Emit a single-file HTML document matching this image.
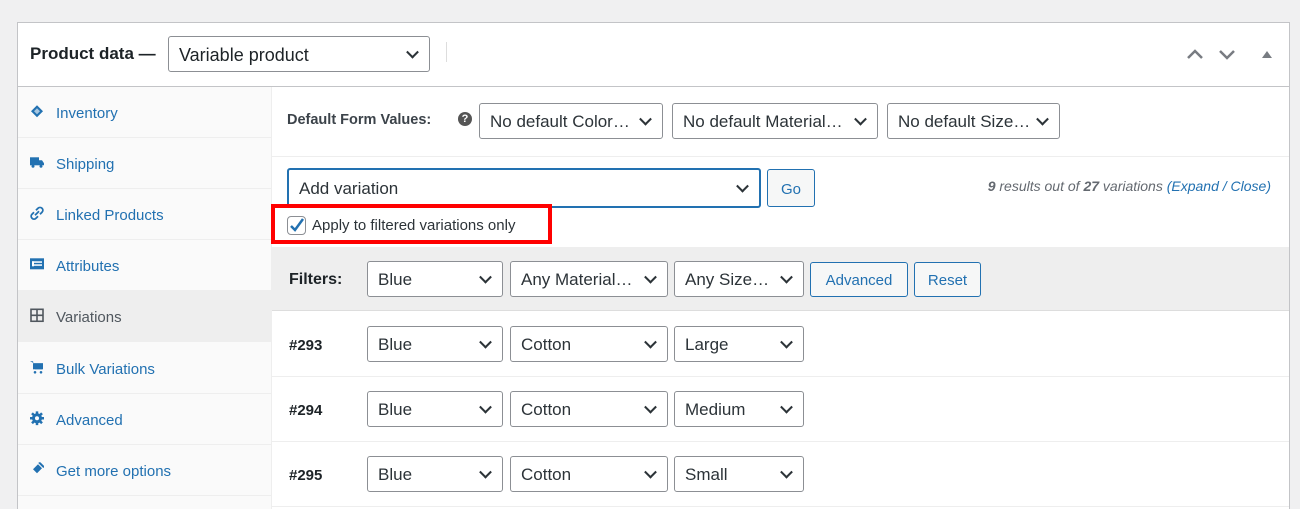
<!DOCTYPE html>
<html><head><meta charset="utf-8"><style>
*{box-sizing:border-box;margin:0;padding:0}
html{width:1300px;height:509px;overflow:hidden}
body{width:1300px;height:509px;background:#f0f0f1;font-family:"Liberation Sans",Arial,sans-serif;position:relative;overflow:hidden;color:#1d2327}
.abs{position:absolute}
.panel{left:17px;top:22px;width:1273px;height:487px;background:#fff;border:1px solid #c3c4c7;border-bottom:none}
.sel{position:absolute;background:#fff;border:1px solid #8c8f94;border-radius:3px;font-size:17px;color:#2c3338;padding-left:10px;padding-top:2px;display:flex;align-items:center;white-space:nowrap;overflow:hidden}
.sel:after{content:"";position:absolute;right:12px;top:50%;width:7px;height:7px;border-right:2px solid #2c3338;border-bottom:2px solid #2c3338;transform:translateY(-70%) rotate(45deg)}
.side{left:18px;top:87px;width:254px;height:422px;background:#fafafa;border-right:1px solid #eee}
.item{position:absolute;left:0;width:254px;height:51px;border-bottom:1px solid #eee;color:#2271b1;font-size:15px;padding-left:38px;padding-top:3px;display:flex;align-items:center}
.ic{position:absolute;left:12px;top:50%;transform:translateY(-55%);width:14px;height:14px}
.btn{position:absolute;border:1px solid #2271b1;border-radius:3px;background:#f6f7f7;color:#2271b1;font-size:15px;padding-top:2px;display:flex;align-items:center;justify-content:center}
.num{position:absolute;left:289px;font-weight:bold;font-size:15px}
.hr{position:absolute;left:272px;width:1017px;height:1px;background:#eee}
</style></head><body>
<div class="abs panel"></div>
<div class="abs" style="left:18px;top:86px;width:1271px;height:1px;background:#c3c4c7"></div>
<div class="abs" style="left:30px;top:44px;font-size:17px;font-weight:600;color:#1d2327">Product data —</div>
<div class="sel" style="left:168px;top:36px;width:262px;height:36px;font-size:18px;color:#1d2327">Variable product</div>
<div class="abs" style="left:446px;top:42px;width:1px;height:20px;background:#ddd"></div>
<svg class="abs" style="left:1185px;top:47px" width="95" height="14"><path d="M3 11 L10 4 L17 11" stroke="#787c82" stroke-width="2.5" fill="none"/><path d="M35 4 L42 11 L49 4" stroke="#787c82" stroke-width="2.5" fill="none"/><path d="M77 11 L82 4 L87 11Z" fill="#787c82"/></svg>

<div class="abs side"></div>
<div class="item" style="left:18px;top:87px">
<svg class="ic" viewBox="0 0 14 14"><path d="M1 7 L7 1 L13 7 L7 13Z" fill="#2271b1"/><path d="M4 7 L7 4 L10 7 L7 10Z" fill="#fff" opacity=".6"/></svg>Inventory</div>
<div class="item" style="left:18px;top:138px">
<svg class="ic" viewBox="0 0 14 14"><rect x="0" y="2" width="9" height="8" fill="#2271b1"/><path d="M9 5h3l2 3v2H9Z" fill="#2271b1"/><circle cx="3" cy="11" r="1.5" fill="#2271b1"/><circle cx="11" cy="11" r="1.5" fill="#2271b1"/></svg>Shipping</div>
<div class="item" style="left:18px;top:189px">
<svg class="ic" viewBox="0 0 14 14"><path d="M6 4 L8 2 A2.5 2.5 0 0 1 12 6 L10 8 M8 10 L6 12 A2.5 2.5 0 0 1 2 8 L4 6 M5 9 L9 5" stroke="#2271b1" stroke-width="1.8" fill="none"/></svg>Linked Products</div>
<div class="item" style="left:18px;top:240px">
<svg class="ic" viewBox="0 0 14 14"><rect x="0" y="1" width="14" height="11" fill="#2271b1"/><rect x="2" y="4" width="10" height="1.5" fill="#fff"/><rect x="2" y="7" width="10" height="1.5" fill="#fff"/><rect x="2" y="4" width="2" height="5" fill="#fff"/></svg>Attributes</div>
<div class="item" style="left:18px;top:291px;background:#eee;color:#50575e">
<svg class="ic" viewBox="0 0 14 14"><rect x="1" y="1" width="12" height="12" stroke="#50575e" stroke-width="1.6" fill="none"/><path d="M7 1v12M1 7h12" stroke="#50575e" stroke-width="1.6"/></svg>Variations</div>
<div class="item" style="left:18px;top:343px">
<svg class="ic" viewBox="0 0 14 14"><path d="M0 1h3l2 8h7l1-6H4" fill="#2271b1"/><rect x="3" y="3" width="10" height="6" fill="#2271b1"/><circle cx="5" cy="12" r="1.3" fill="#2271b1"/><circle cx="11" cy="12" r="1.3" fill="#2271b1"/></svg>Bulk Variations</div>
<div class="item" style="left:18px;top:394px">
<svg class="ic" viewBox="0 0 14 14"><circle cx="7" cy="7" r="5" fill="#2271b1"/><path d="M7 0v14M0 7h14M2 2l10 10M12 2L2 12" stroke="#2271b1" stroke-width="2.5"/><circle cx="7" cy="7" r="2" fill="#fff"/></svg>Advanced</div>
<div class="item" style="left:18px;top:445px">
<svg class="ic" viewBox="0 0 14 14"><path d="M1 13 L5 9 L3 7 L8 2 L12 6 L7 11 L5 9" fill="#2271b1"/><path d="M9 0l5 5" stroke="#2271b1" stroke-width="2"/></svg>Get more options</div>

<div class="abs" style="left:287px;top:112px;font-size:14.5px;font-weight:bold;color:#3c434a">Default Form Values:</div>
<div class="abs" style="left:458px;top:112px;width:14px;height:14px;border-radius:50%;background:#555;color:#fff;font-size:11px;font-weight:bold;text-align:center;line-height:14px">?</div>
<div class="sel" style="left:479px;top:103px;width:184px;height:36px">No default Color…</div>
<div class="sel" style="left:672px;top:103px;width:206px;height:36px">No default Material…</div>
<div class="sel" style="left:887px;top:103px;width:173px;height:36px">No default Size…</div>
<div class="hr" style="top:156px"></div>

<div class="sel" style="left:287px;top:168px;width:474px;height:40px;border:2px solid #2271b1;font-size:17px">Add variation</div>
<div class="btn" style="left:767px;top:169px;width:48px;height:38px">Go</div>
<div class="abs" style="right:29px;top:178px;font-size:14px;font-style:italic;color:#646970"><b>9</b> results out of <b>27</b> variations <span style="color:#2271b1">(Expand / Close)</span></div>

<div class="abs" style="left:271px;top:204px;width:281px;height:40px;border:4px solid #f00"></div>
<div class="abs" style="left:287px;top:216px;width:19px;height:19px;border:1px solid #8c8f94;border-radius:4px;background:#fff"><svg width="17" height="17"><path d="M3 9 L7 13 L15 2" stroke="#2271b1" stroke-width="2.5" fill="none"/></svg></div>
<div class="abs" style="left:312px;top:217px;font-size:15px;color:#2c3338">Apply to filtered variations only</div>

<div class="abs" style="left:272px;top:247px;width:1017px;height:64px;background:#eee;border-bottom:1px solid #ddd"></div>
<div class="abs" style="left:289px;top:271px;font-size:16px;font-weight:bold;color:#1d2327">Filters:</div>
<div class="sel" style="left:367px;top:261px;width:136px;height:36px">Blue</div>
<div class="sel" style="left:510px;top:261px;width:158px;height:36px">Any Material…</div>
<div class="sel" style="left:674px;top:261px;width:130px;height:36px">Any Size…</div>
<div class="btn" style="left:810px;top:262px;width:98px;height:35px">Advanced</div>
<div class="btn" style="left:914px;top:262px;width:67px;height:35px">Reset</div>

<div class="num" style="top:337px">#293</div>
<div class="sel" style="left:367px;top:326px;width:136px;height:36px">Blue</div>
<div class="sel" style="left:510px;top:326px;width:158px;height:36px">Cotton</div>
<div class="sel" style="left:674px;top:326px;width:130px;height:36px">Large</div>
<div class="hr" style="top:376px"></div>
<div class="num" style="top:402px">#294</div>
<div class="sel" style="left:367px;top:391px;width:136px;height:36px">Blue</div>
<div class="sel" style="left:510px;top:391px;width:158px;height:36px">Cotton</div>
<div class="sel" style="left:674px;top:391px;width:130px;height:36px">Medium</div>
<div class="hr" style="top:441px"></div>
<div class="num" style="top:467px">#295</div>
<div class="sel" style="left:367px;top:456px;width:136px;height:36px">Blue</div>
<div class="sel" style="left:510px;top:456px;width:158px;height:36px">Cotton</div>
<div class="sel" style="left:674px;top:456px;width:130px;height:36px">Small</div>
<div class="hr" style="top:506px"></div>
</body></html>
